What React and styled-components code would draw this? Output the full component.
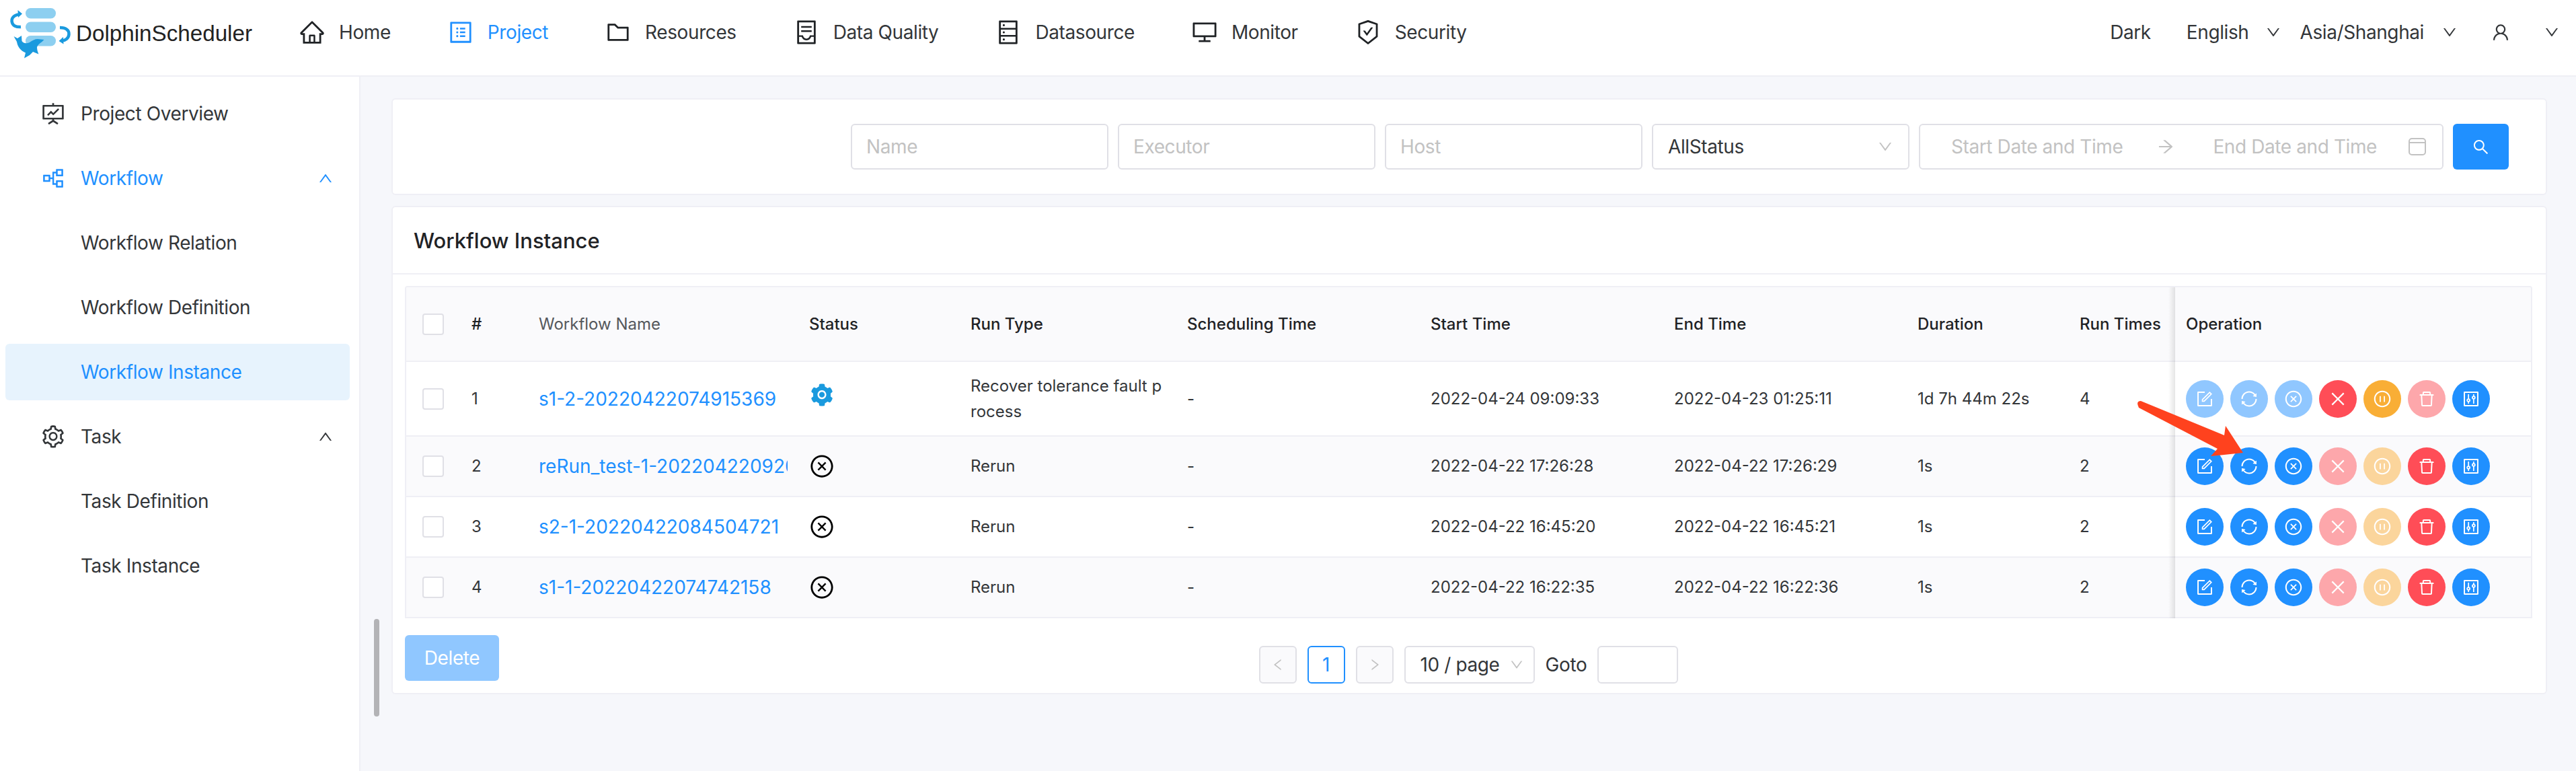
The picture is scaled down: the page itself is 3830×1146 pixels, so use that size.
import React from 'react';
import styled, { createGlobalStyle } from 'styled-components';
import {
  AiOutlineHome,
  AiOutlineProfile,
  AiOutlineFolder,
  AiOutlineContainer,
  AiOutlineDatabase,
  AiOutlineDesktop,
  AiOutlineSafetyCertificate,
  AiOutlineFundProjectionScreen,
  AiOutlinePartition,
  AiOutlineSetting,
  AiFillSetting,
  AiOutlineUser,
  AiOutlineDown,
  AiOutlineUp,
  AiOutlineLeft,
  AiOutlineRight,
  AiOutlineArrowRight,
  AiOutlineSearch,
  AiOutlineForm,
  AiOutlineSync,
  AiOutlineCloseCircle,
  AiOutlineClose,
  AiOutlinePauseCircle,
  AiOutlineDelete,
  AiOutlineControl,
} from 'react-icons/ai';

const blue = '#2090ff';
const text = '#333639';
const line = '#efeff5';
const inputLine = '#e0e0e6';
const hint = '#c2c2c2';

const GlobalStyle = createGlobalStyle`
  html, body {
    margin: 0;
    background: #f6f7fb;
    overflow: hidden;
  }
  * {
    box-sizing: border-box;
  }
  body {
    font-family: Inter, "Noto Sans", sans-serif;
    font-size: 28px;
    letter-spacing: -0.4px;
    color: ${text};
  }
`;

const Page = styled.div`
  position: relative;
  width: 3830px;
  height: 1146px;
  display: flex;
  flex-direction: column;
`;

const Header = styled.header`
  height: 114px;
  flex-shrink: 0;
  background: #fff;
  border-bottom: 2px solid ${line};
  display: flex;
  align-items: flex-start;
  justify-content: space-between;
`;

const Brand = styled.div`
  width: 444px;
  height: 96px;
  display: flex;
  align-items: flex-start;
`;

const BrandName = styled.span`
  font-family: 'Liberation Sans', Arial, sans-serif;
  font-size: 33.2px;
  letter-spacing: 0;
  color: #222;
  margin: 31px 0 0 3px;
  line-height: 38px;
`;

const HeaderLeft = styled.div`
  display: flex;
`;

const NavList = styled.nav`
  height: 96px;
  display: flex;
  align-items: center;
  gap: 84px;
`;

const NavItem = styled.div`
  display: flex;
  align-items: center;
  gap: 20px;
  color: ${({ $active }) => ($active ? blue : text)};
  svg {
    display: block;
    color: ${({ $active }) => ($active ? blue : '#1f2225')};
  }
`;

const HeaderRight = styled.div`
  height: 96px;
  display: flex;
  align-items: center;
  padding-right: 24px;
`;

const RightLabel = styled.span`
  margin-left: ${({ $gap }) => $gap}px;
`;

const Chevron = styled(AiOutlineDown)`
  display: block;
  flex-shrink: 0;
  margin-left: ${({ $gap }) => $gap || 0}px;
  color: ${({ $muted }) => ($muted ? hint : text)};
`;

const UserIcon = styled(AiOutlineUser)`
  display: block;
  margin-left: 49px;
`;

const Body = styled.div`
  flex: 1;
  display: flex;
  min-height: 0;
`;

const Sidebar = styled.aside`
  width: 536px;
  flex-shrink: 0;
  background: #fff;
  border-right: 2px solid ${line};
  padding: 1px 14px 0 8px;
`;

const MenuRow = styled.div`
  height: 84px;
  margin-top: 12px;
  border-radius: 6px;
  display: flex;
  align-items: center;
  padding: 0 24px 0 ${({ $child }) => ($child ? 112 : 52)}px;
  background: ${({ $selected }) => ($selected ? '#e7f3fd' : 'transparent')};
  color: ${({ $active }) => ($active ? blue : text)};
  svg {
    display: block;
    flex-shrink: 0;
  }
`;

const MenuLabel = styled.span`
  flex: 1;
  margin-left: ${({ $child }) => ($child ? 0 : 22)}px;
`;

const ScrollThumb = styled.div`
  position: absolute;
  left: 556px;
  top: 920px;
  width: 8px;
  height: 145px;
  border-radius: 4px;
  background: #b3b3b6;
`;

const Content = styled.main`
  flex: 1;
  min-width: 0;
  padding: 32px 43px 0 46px;
  display: flex;
  flex-direction: column;
  gap: 16px;
`;

const Card = styled.section`
  background: #fff;
  border: 2px solid ${line};
  border-radius: 6px;
`;

const FilterCard = styled(Card)`
  height: 144px;
  display: flex;
  align-items: center;
  justify-content: flex-end;
  gap: 14px;
  padding-right: 55px;
`;

const Field = styled.input`
  width: 383px;
  height: 68px;
  border: 2px solid ${inputLine};
  border-radius: 6px;
  padding: 0 21px;
  font: inherit;
  letter-spacing: inherit;
  color: ${text};
  outline: none;
  &::placeholder {
    color: ${hint};
    opacity: 1;
  }
`;

const SelectBox = styled.div`
  width: ${({ $width }) => $width}px;
  height: ${({ $height }) => $height}px;
  border: 2px solid ${inputLine};
  border-radius: 6px;
  padding: ${({ $pad }) => $pad};
  display: flex;
  align-items: center;
  justify-content: space-between;
`;

const DateRange = styled.div`
  width: 780px;
  height: 68px;
  border: 2px solid ${inputLine};
  border-radius: 6px;
  padding: 0 24px 0 46px;
  display: flex;
  align-items: center;
  color: ${hint};
  svg {
    display: block;
    flex-shrink: 0;
  }
`;

const DateHint = styled.span`
  white-space: nowrap;
`;

const DateArrow = styled(AiOutlineArrowRight)`
  margin: 0 56px 0 50px;
`;

const CalendarIcon = styled.svg`
  margin-left: auto;
`;

const SearchButton = styled.button`
  width: 83px;
  height: 68px;
  border: 0;
  border-radius: 6px;
  background: ${blue};
  color: #fff;
  display: flex;
  align-items: center;
  justify-content: center;
  padding: 0;
`;

const ListCard = styled(Card)`
  height: 726px;
`;

const CardTitle = styled.h2`
  margin: 0;
  height: 100px;
  padding-left: 31px;
  border-bottom: 2px solid ${line};
  display: flex;
  align-items: center;
  font-size: 31px;
  font-weight: 500;
  letter-spacing: 0;
  color: #1f2225;
`;

const CardBody = styled.div`
  padding: 17px 20px 0 18px;
`;

const TableFrame = styled.div`
  border: 2px solid ${line};
  border-bottom: 0;
  border-radius: 4px 4px 0 0;
  overflow: hidden;
`;

const Table = styled.table`
  width: 100%;
  table-layout: fixed;
  border-collapse: separate;
  border-spacing: 0;
  font-size: 24px;
  letter-spacing: 0;
`;

const Col = styled.col`
  width: ${({ $w }) => $w}px;
`;

const Row = styled.tr`
  height: ${({ $h }) => $h}px;
  background: ${({ $tinted }) => ($tinted ? '#fafafc' : '#fff')};
`;

const HeadCell = styled.th`
  padding: 0 16px;
  text-align: left;
  font-weight: ${({ $light }) => ($light ? 400 : 500)};
  color: ${({ $light }) => ($light ? '#55585c' : '#1f2225')};
  border-bottom: 2px solid ${line};
  white-space: nowrap;
  overflow: hidden;
`;

const Cell = styled.td`
  padding: 0 16px;
  border-bottom: 2px solid ${line};
  line-height: 38px;
  word-break: break-all;
`;

const FixedHead = styled(HeadCell)`
  position: relative;
  overflow: visible;
`;

const FixedCell = styled(Cell)`
  position: relative;
`;

const FixedShadow = styled.span`
  position: absolute;
  top: 0;
  bottom: -2px;
  left: -10px;
  width: 10px;
  background: linear-gradient(to left, rgba(0, 0, 0, 0.1), rgba(0, 0, 0, 0));
`;

const Check = styled.span`
  display: block;
  width: 32px;
  height: 32px;
  margin-left: 8px;
  background: #fff;
  border: 2px solid ${inputLine};
  border-radius: 4px;
`;

const NameLink = styled.a`
  display: block;
  font-size: 28px;
  color: ${blue};
  white-space: nowrap;
  overflow: hidden;
`;

const StatusIcon = styled.span`
  display: block;
  width: 38px;
  height: 38px;
  margin: 0 0 ${({ $raised }) => ($raised ? 12 : 0)}px 0;
  color: ${({ $raised }) => ($raised ? '#1a9ade' : '#000')};
  svg {
    display: block;
  }
`;

const Actions = styled.div`
  display: flex;
  gap: 10px;
`;

const toneColor = {
  blue,
  red: '#ff4d57',
  orange: '#f9ae36',
  paleBlue: '#90c7ff',
  paleRed: '#fda7ab',
  paleOrange: '#fbd59c',
};

const ActionButton = styled.span`
  width: 56px;
  height: 56px;
  border-radius: 50%;
  background: ${({ $tone }) => toneColor[$tone]};
  color: #fff;
  display: flex;
  align-items: center;
  justify-content: center;
  svg {
    display: block;
  }
`;

const Footer = styled.div`
  display: grid;
  grid-template-columns: 1fr auto 1fr;
  align-items: start;
  padding-top: 25px;
`;

const DeleteButton = styled.button`
  justify-self: start;
  width: 140px;
  height: 68px;
  border: 0;
  border-radius: 6px;
  background: #90c7ff;
  color: #fff;
  font: inherit;
  letter-spacing: inherit;
  padding: 0;
`;

const Pager = styled.div`
  margin-top: 16px;
  display: flex;
  align-items: center;
  gap: 16px;
`;

const PageButton = styled.span`
  width: 56px;
  height: 56px;
  border: 2px solid ${({ $current }) => ($current ? blue : inputLine)};
  border-radius: 6px;
  background: ${({ $off }) => ($off ? '#fafafc' : '#fff')};
  color: ${({ $current }) => ($current ? blue : hint)};
  display: flex;
  align-items: center;
  justify-content: center;
`;

const GotoInput = styled.span`
  width: 120px;
  height: 56px;
  border: 2px solid ${inputLine};
  border-radius: 6px;
  background: #fff;
`;

const RedArrow = styled.svg`
  position: absolute;
  left: 3170px;
  top: 590px;
`;

const menuItems = [
  { label: 'Home', Icon: AiOutlineHome },
  { label: 'Project', Icon: AiOutlineProfile, active: true },
  { label: 'Resources', Icon: AiOutlineFolder },
  { label: 'Data Quality', Icon: AiOutlineContainer },
  { label: 'Datasource', Icon: AiOutlineDatabase },
  { label: 'Monitor', Icon: AiOutlineDesktop },
  { label: 'Security', Icon: AiOutlineSafetyCertificate },
];

const columns = [
  { key: 'check', w: 81 },
  { key: 'no', w: 100, title: '#' },
  { key: 'name', w: 402, title: 'Workflow Name', light: true },
  { key: 'status', w: 240, title: 'Status' },
  { key: 'type', w: 322, title: 'Run Type' },
  { key: 'sched', w: 362, title: 'Scheduling Time' },
  { key: 'start', w: 362, title: 'Start Time' },
  { key: 'end', w: 362, title: 'End Time' },
  { key: 'dur', w: 241, title: 'Duration' },
  { key: 'times', w: 158, title: 'Run Times' },
];

const rows = [
  {
    name: 's1-2-20220422074915369',
    running: true,
    type: 'Recover tolerance fault process',
    start: '2022-04-24 09:09:33',
    end: '2022-04-23 01:25:11',
    dur: '1d 7h 44m 22s',
    times: 4,
    h: 111,
  },
  {
    name: 'reRun_test-1-20220422092018341',
    type: 'Rerun',
    start: '2022-04-22 17:26:28',
    end: '2022-04-22 17:26:29',
    dur: '1s',
    times: 2,
    h: 90,
  },
  {
    name: 's2-1-20220422084504721',
    type: 'Rerun',
    start: '2022-04-22 16:45:20',
    end: '2022-04-22 16:45:21',
    dur: '1s',
    times: 2,
    h: 90,
  },
  {
    name: 's1-1-20220422074742158',
    type: 'Rerun',
    start: '2022-04-22 16:22:35',
    end: '2022-04-22 16:22:36',
    dur: '1s',
    times: 2,
    h: 90,
  },
];

const Logo = () => (
  <svg width="110" height="96" viewBox="0 0 110 96">
    <rect x="38" y="12" width="45" height="15.5" rx="7.5" fill="#8dcff0" />
    <rect x="38" y="32.5" width="45" height="15.5" rx="7.5" fill="#8dcff0" />
    <rect x="38" y="53" width="45" height="15.5" rx="7.5" fill="#8dcff0" />
    <path d="M28 21.5C19 23 16.5 28 18 33.5C19 38 24 40.5 31 40" fill="none" stroke="#1a9ade" strokeWidth="4.5" />
    <path d="M26.5 15L33 20.5L27 26Z" fill="#1a9ade" />
    <path d="M89 41C98 41 103 45 102.5 51C102 57 97 60.5 92 60.5" fill="none" stroke="#1a9ade" strokeWidth="4.5" />
    <path d="M94 55L87.5 61L94.5 65.5Z" fill="#1a9ade" />
    <path
      d="M20.5 54L26 57L32 53L32.5 61C35 65 40 65 44 63C48 60 52 58 56 58L65.5 59L62 62.5C59 64 56 67 55 70C55 74 56 77 57.5 80.5L49 77L44 82L36 86.5L38 78.5C30 75 26 69 25 62Z"
      fill="#1a9ade"
    />
  </svg>
);

const rowActions = (running) => [
  { Icon: AiOutlineForm, tone: running ? 'paleBlue' : 'blue' },
  { Icon: AiOutlineSync, tone: running ? 'paleBlue' : 'blue' },
  { Icon: AiOutlineCloseCircle, tone: running ? 'paleBlue' : 'blue' },
  { Icon: AiOutlineClose, tone: running ? 'red' : 'paleRed' },
  { Icon: AiOutlinePauseCircle, tone: running ? 'orange' : 'paleOrange' },
  { Icon: AiOutlineDelete, tone: running ? 'paleRed' : 'red' },
  { Icon: AiOutlineControl, tone: 'blue' },
];

const App = () => {
  return (
    <Page>
      <GlobalStyle />
      <Header>
        <HeaderLeft>
          <Brand>
            <Logo />
            <BrandName>DolphinScheduler</BrandName>
          </Brand>
          <NavList>
            {menuItems.map(({ label, Icon, active }) => (
              <NavItem key={label} $active={active}>
                <Icon size={40} />
                {label}
              </NavItem>
            ))}
          </NavList>
        </HeaderLeft>
        <HeaderRight>
          <span>Dark</span>
          <RightLabel $gap={53}>English</RightLabel>
          <Chevron size={24} $gap={25} />
          <RightLabel $gap={27}>Asia/Shanghai</RightLabel>
          <Chevron size={24} $gap={26} />
          <UserIcon size={30} />
          <Chevron size={24} $gap={49} />
        </HeaderRight>
      </Header>
      <Body>
        <Sidebar>
          <MenuRow>
            <AiOutlineFundProjectionScreen size={38} />
            <MenuLabel>Project Overview</MenuLabel>
          </MenuRow>
          <MenuRow $active>
            <AiOutlinePartition size={38} />
            <MenuLabel>Workflow</MenuLabel>
            <AiOutlineUp size={24} />
          </MenuRow>
          <MenuRow $child>
            <MenuLabel $child>Workflow Relation</MenuLabel>
          </MenuRow>
          <MenuRow $child>
            <MenuLabel $child>Workflow Definition</MenuLabel>
          </MenuRow>
          <MenuRow $child $active $selected>
            <MenuLabel $child>Workflow Instance</MenuLabel>
          </MenuRow>
          <MenuRow>
            <AiOutlineSetting size={38} />
            <MenuLabel>Task</MenuLabel>
            <AiOutlineUp size={24} />
          </MenuRow>
          <MenuRow $child>
            <MenuLabel $child>Task Definition</MenuLabel>
          </MenuRow>
          <MenuRow $child>
            <MenuLabel $child>Task Instance</MenuLabel>
          </MenuRow>
        </Sidebar>
        <Content>
          <FilterCard>
            <Field placeholder="Name" />
            <Field placeholder="Executor" />
            <Field placeholder="Host" />
            <SelectBox $width={383} $height={68} $pad="0 22px">
              AllStatus
              <Chevron size={24} $muted />
            </SelectBox>
            <DateRange>
              <DateHint>Start Date and Time</DateHint>
              <DateArrow size={28} />
              <DateHint>End Date and Time</DateHint>
              <CalendarIcon width="26" height="26" viewBox="0 0 26 26" fill="none" stroke={hint} strokeWidth="2">
                <rect x="1" y="1" width="24" height="24" rx="4" />
                <path d="M1 7H25" />
              </CalendarIcon>
            </DateRange>
            <SearchButton>
              <AiOutlineSearch size={27} />
            </SearchButton>
          </FilterCard>
          <ListCard>
            <CardTitle>Workflow Instance</CardTitle>
            <CardBody>
              <TableFrame>
                <Table>
                  <colgroup>
                    {columns.map((col) => (
                      <Col key={col.key} $w={col.w} />
                    ))}
                    <col />
                  </colgroup>
                  <thead>
                    <Row $h={111} $tinted>
                      <HeadCell>
                        <Check />
                      </HeadCell>
                      {columns.slice(1).map((col) => (
                        <HeadCell key={col.key} $light={col.light}>
                          {col.title}
                        </HeadCell>
                      ))}
                      <FixedHead>
                        <FixedShadow />
                        Operation
                      </FixedHead>
                    </Row>
                  </thead>
                  <tbody>
                    {rows.map((row, index) => (
                      <Row key={row.name} $h={row.h} $tinted={index % 2 === 1}>
                        <Cell>
                          <Check />
                        </Cell>
                        <Cell>{index + 1}</Cell>
                        <Cell>
                          <NameLink>{row.name}</NameLink>
                        </Cell>
                        <Cell>
                          <StatusIcon $raised={row.running}>
                            {row.running ? <AiFillSetting size={38} /> : <AiOutlineCloseCircle size={38} />}
                          </StatusIcon>
                        </Cell>
                        <Cell>{row.type}</Cell>
                        <Cell>-</Cell>
                        <Cell>{row.start}</Cell>
                        <Cell>{row.end}</Cell>
                        <Cell>{row.dur}</Cell>
                        <Cell>{row.times}</Cell>
                        <FixedCell>
                          <FixedShadow />
                          <Actions>
                            {rowActions(row.running).map(({ Icon, tone }, i) => (
                              <ActionButton key={i} $tone={tone}>
                                <Icon size={28} />
                              </ActionButton>
                            ))}
                          </Actions>
                        </FixedCell>
                      </Row>
                    ))}
                  </tbody>
                </Table>
              </TableFrame>
              <Footer>
                <DeleteButton>Delete</DeleteButton>
                <Pager>
                  <PageButton $off>
                    <AiOutlineLeft size={22} />
                  </PageButton>
                  <PageButton $current>1</PageButton>
                  <PageButton $off>
                    <AiOutlineRight size={22} />
                  </PageButton>
                  <SelectBox $width={194} $height={56} $pad="0 14px 0 22px">
                    10 / page
                    <Chevron size={22} $muted />
                  </SelectBox>
                  <span>Goto</span>
                  <GotoInput />
                </Pager>
                <span />
              </Footer>
            </CardBody>
          </ListCard>
        </Content>
      </Body>
      <ScrollThumb />
      <RedArrow width="175" height="95" viewBox="0 0 175 95">
        <path d="M13 6L137 57L139 43L165 83L117 88L127 77L10 16Q5 6 13 6Z" fill="#ff421e" />
      </RedArrow>
    </Page>
  );
};

export default App;
